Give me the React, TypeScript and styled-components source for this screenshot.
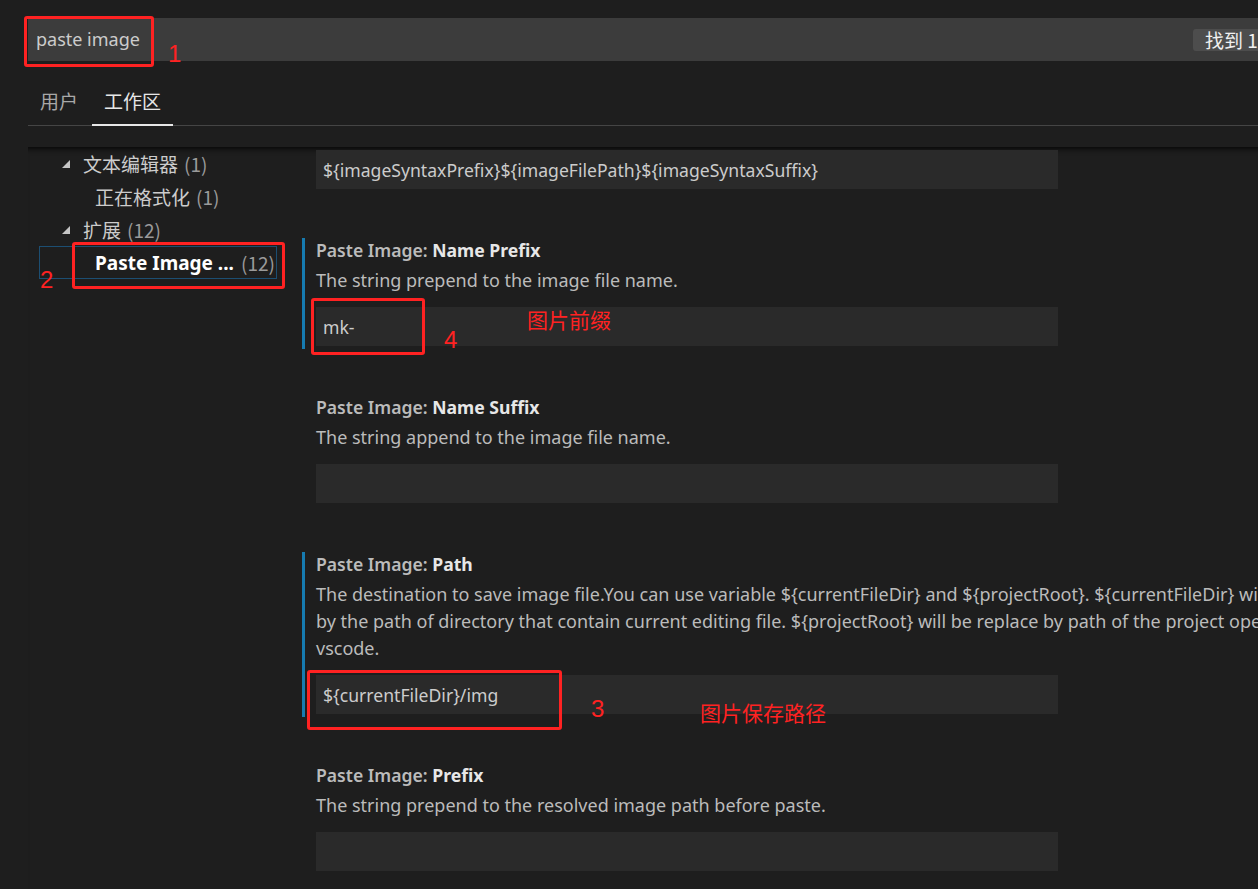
import styled, { createGlobalStyle } from 'styled-components';

const GlobalStyle = createGlobalStyle`
  html, body {
    margin: 0;
    padding: 0;
    background: #1e1e1e;
    overflow: hidden;
  }
  * { box-sizing: border-box; }
`;

const FONT = `"Noto Sans", "Noto Sans CJK SC", sans-serif`;
const CJK = `"Noto Sans CJK SC", "Noto Sans", sans-serif`;

const Page = styled.div`
  position: relative;
  width: 1258px;
  height: 889px;
  overflow: hidden;
  background: #1e1e1e;
  padding-top: 18px;
  font-family: ${FONT};
  font-size: 18px;
  color: #cccccc;
`;

const Header = styled.div`
  padding-left: 28px;
`;

const SearchBar = styled.div`
  display: flex;
  align-items: center;
  width: 1300px;
  height: 43px;
  background: #3c3c3c;
`;

const SearchText = styled.div`
  width: 1165px;
  flex-shrink: 0;
  padding-left: 8px;
  padding-bottom: 2px;
  color: #cccccc;
  font-size: 18px;
`;

const Badge = styled.div`
  flex-shrink: 0;
  height: 22px;
  padding: 0 12px;
  display: flex;
  align-items: center;
  border-radius: 3px;
  background: #4d4d4d;
  color: #f0f0f0;
  font-family: ${CJK};
  font-size: 19px;
`;

const Tabs = styled.div`
  display: flex;
  height: 46px;
  margin-top: 19px;
  border-bottom: 1px solid #454545;
`;

const Tab = styled.div<{ $active?: boolean }>`
  display: flex;
  align-items: center;
  padding: 0 12px 3px;
  margin-right: 2px;
  margin-bottom: -1px;
  font-family: ${CJK};
  font-size: 19px;
  color: ${(p) => (p.$active ? '#e7e7e7' : '#a8a8a8')};
  border-bottom: 2px solid ${(p) => (p.$active ? '#e7e7e7' : 'transparent')};
`;

const Body = styled.div`
  display: flex;
  margin-top: 21px;
  margin-left: 28px;
  height: 800px;
  box-shadow: inset 0 7px 6px -6px #000;
`;

const Tree = styled.div`
  width: 249px;
  flex-shrink: 0;
  padding-left: 11px;
`;

const TreeRow = styled.div<{ $level: number; $selected?: boolean }>`
  display: flex;
  align-items: center;
  height: 33px;
  padding-left: ${(p) => (p.$level === 1 ? 23 : 56)}px;
  padding-right: 2px;
  font-family: ${CJK};
  font-size: 19px;
  color: ${(p) => (p.$selected ? '#ffffff' : '#cccccc')};
  outline: ${(p) => (p.$selected ? '1px solid #1c4e72' : 'none')};
  outline-offset: -1px;
  font-weight: ${(p) => (p.$selected ? 700 : 400)};
`;

const TreeLabel = styled.span`
  font-family: ${FONT};
`;

const Twistie = styled.svg`
  width: 8px;
  height: 8px;
  margin-right: 13px;
  flex-shrink: 0;
`;

const Count = styled.span<{ $push?: boolean }>`
  color: #9a9a9a;
  font-weight: 400;
  margin-left: ${(p) => (p.$push ? 'auto' : '6px')};
`;

const List = styled.div`
  display: flex;
  flex-direction: column;
  gap: 46px;
  padding-top: 3px;
  margin-left: 25px;
  width: 1000px;
  flex-shrink: 0;
`;

const Setting = styled.div<{ $modified?: boolean }>`
  padding: 0 0 3px 11px;
  border-left: 3px solid ${(p) => (p.$modified ? '#167bb0' : 'transparent')};
`;

const Title = styled.div`
  height: 24px;
  line-height: 24px;
  font-size: 17.6px;
  white-space: nowrap;
`;

const Category = styled.span`
  color: #bbbbbb;
  font-weight: 600;
`;

const Name = styled.span`
  color: #e7e7e7;
  font-weight: 700;
`;

const Desc = styled.div<{ $cont?: boolean }>`
  margin-top: ${(p) => (p.$cont ? 0 : 5)}px;
  line-height: 27px;
  color: #bbbbbb;
  white-space: nowrap;
`;

const Input = styled.div<{ $flush?: boolean }>`
  width: 742px;
  height: 39px;
  margin-top: ${(p) => (p.$flush ? 0 : 13)}px;
  padding-left: 7px;
  display: flex;
  align-items: center;
  background: #2a2a2a;
  color: #cccccc;
  font-size: 17.6px;
  white-space: nowrap;
`;

const Mark = styled.div<{ $x: number; $y: number; $w: number; $h: number }>`
  position: absolute;
  left: ${(p) => p.$x}px;
  top: ${(p) => p.$y}px;
  width: ${(p) => p.$w}px;
  height: ${(p) => p.$h}px;
  border: 3px solid #ff2222;
  border-radius: 3px;
`;

const Note = styled.div<{ $x: number; $y: number }>`
  position: absolute;
  left: ${(p) => p.$x}px;
  top: ${(p) => p.$y}px;
  color: #ff2222;
  font-family: ${CJK};
  font-size: 21px;
  line-height: 1;
`;

const Num = styled(Note)`
  font-family: "Liberation Sans", sans-serif;
  font-size: 24px;
`;

const Tri = () => (
  <Twistie viewBox="0 0 8 8">
    <polygon points="8,0 8,8 0,8" fill="#c5c5c5" />
  </Twistie>
);

export default function App() {
  return (
    <Page>
      <GlobalStyle />
      <Header>
        <SearchBar>
          <SearchText>paste image</SearchText>
          <Badge>找到 12 个设置</Badge>
        </SearchBar>
        <Tabs>
          <Tab>用户</Tab>
          <Tab $active>工作区</Tab>
        </Tabs>
      </Header>

      <Body>
        <Tree>
          <TreeRow $level={1}>
            <Tri />
            文本编辑器<Count>(1)</Count>
          </TreeRow>
          <TreeRow $level={2}>
            正在格式化<Count>(1)</Count>
          </TreeRow>
          <TreeRow $level={1}>
            <Tri />
            扩展<Count>(12)</Count>
          </TreeRow>
          <TreeRow $level={2} $selected>
            <TreeLabel>Paste Image ...</TreeLabel>
            <Count $push>(12)</Count>
          </TreeRow>
        </Tree>

        <List>
          <Setting>
            <Input $flush>{'${imageSyntaxPrefix}${imageFilePath}${imageSyntaxSuffix}'}</Input>
          </Setting>

          <Setting $modified>
            <Title>
              <Category>Paste Image: </Category>
              <Name>Name Prefix</Name>
            </Title>
            <Desc>The string prepend to the image file name.</Desc>
            <Input>mk-</Input>
          </Setting>

          <Setting>
            <Title>
              <Category>Paste Image: </Category>
              <Name>Name Suffix</Name>
            </Title>
            <Desc>The string append to the image file name.</Desc>
            <Input />
          </Setting>

          <Setting $modified>
            <Title>
              <Category>Paste Image: </Category>
              <Name>Path</Name>
            </Title>
            <Desc>
              {'The destination to save image file.You can use variable ${currentFileDir} and ${projectRoot}. ${currentFileDir} will be replace'}
            </Desc>
            <Desc $cont>
              {'by the path of directory that contain current editing file. ${projectRoot} will be replace by path of the project opened in'}
            </Desc>
            <Desc $cont>vscode.</Desc>
            <Input>{'${currentFileDir}/img'}</Input>
          </Setting>

          <Setting>
            <Title>
              <Category>Paste Image: </Category>
              <Name>Prefix</Name>
            </Title>
            <Desc>The string prepend to the resolved image path before paste.</Desc>
            <Input />
          </Setting>
        </List>
      </Body>

      <Mark $x={24} $y={16} $w={130} $h={51} />
      <Num $x={168} $y={42}>1</Num>
      <Mark $x={72} $y={242} $w={213} $h={47} />
      <Num $x={40} $y={268}>2</Num>
      <Mark $x={311} $y={298} $w={114} $h={57} />
      <Num $x={444} $y={328}>4</Num>
      <Note $x={527} $y={309}>图片前缀</Note>
      <Mark $x={307} $y={670} $w={255} $h={60} />
      <Num $x={591} $y={697}>3</Num>
      <Note $x={700} $y={702}>图片保存路径</Note>
    </Page>
  );
}
